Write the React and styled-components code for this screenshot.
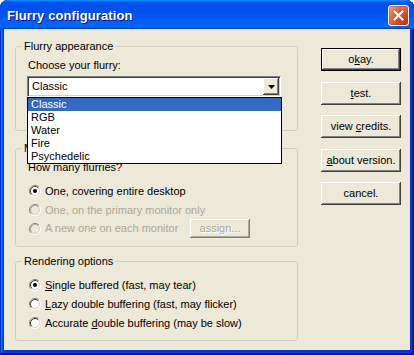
import React from 'react';
import styled, { createGlobalStyle } from 'styled-components';

const Global = createGlobalStyle`
  html, body { margin: 0; padding: 0; background: #ffffff; }
  body { font-family: "Liberation Sans", Arial, sans-serif; font-size: 11px; color: #000; }
  * { box-sizing: border-box; }
`;

const Window = styled.div`
  width: 414px;
  height: 355px;
  display: flex;
  flex-direction: column;
  padding: 0 4px 5px;
  background: #0831d9;
  border-radius: 8px 8px 0 0;
  overflow: hidden;
  box-shadow: inset -1px -1px #00138c, inset 1px 1px #0831d9, inset -2px -2px #001ea0,
    inset 2px 2px #166aee, inset -3px -3px #003bda, inset 3px 3px #0855dd;
`;

const TitleBar = styled.div`
  flex: none;
  height: 29px;
  margin: 0 -4px;
  padding: 2px 5px 0 7px;
  display: flex;
  align-items: center;
  justify-content: space-between;
  border-radius: 8px 8px 0 0;
  background: linear-gradient(180deg, #0997ff, #0053ee 8%, #0050ee 40%, #0066ff 88%, #0066ff 93%, #005bff 95%, #003dd7 96%, #003dd7);
`;

const Title = styled.span`
  font-family: "Liberation Sans", Arial, sans-serif;
  font-weight: bold;
  font-size: 13px;
  line-height: 15px;
  color: #fff;
  text-shadow: 1px 1px #0f1089;
  letter-spacing: 0.1px;
`;

const CloseButton = styled.div`
  width: 21px;
  height: 21px;
  border: 1px solid #fff;
  border-radius: 3px;
  display: flex;
  align-items: center;
  justify-content: center;
  background: radial-gradient(circle at 85% 85%, #c23a12 0%, #d9532b 45%, #e67a55 75%, #f4b49a 100%);
  box-shadow: inset 0 0 0 1px rgba(160, 40, 10, 0.25);
`;

const Client = styled.div`
  flex: 1;
  background: #ece9d8;
  display: flex;
  align-items: flex-start;
  padding: 11px 0 0 11px;
`;

const LeftColumn = styled.div`
  width: 283px;
  display: flex;
  flex-direction: column;
`;

const Group = styled.fieldset`
  margin: ${p => p.$mt || 0}px 0 0;
  padding: 0;
  border: 1px solid #d0d0bf;
  border-radius: 3px;
  min-width: 0;
  position: relative;
`;

const Legend = styled.legend`
  margin-left: 6px;
  padding: 0 2px;
  height: 13px;
  line-height: 13px;
  font-size: 11px;
  color: #000;
`;

const GroupBody = styled.div`
  padding: ${p => p.$pt}px 15px ${p => p.$pb}px 11px;
  display: flex;
  flex-direction: column;
`;

const Label = styled.div`
  line-height: 13px;
  height: 13px;
  padding-left: 1px;
  color: ${p => (p.$disabled ? '#aca899' : '#000')};
`;

const SelectWrap = styled.div`
  position: relative;
  margin-top: 4px;
  width: 254px;
`;

const SelectBox = styled.div`
  height: 21px;
  display: flex;
  align-items: center;
  justify-content: space-between;
  background: #fff;
  border: 1px solid;
  border-color: #808080 #fff #fff #808080;
  box-shadow: inset 1px 1px #404040, inset -1px -1px #d4d0c8;
  padding: 0 1px 0 4px;
  line-height: 13px;
`;

const DropButton = styled.div`
  width: 16px;
  height: 17px;
  display: flex;
  align-items: center;
  justify-content: center;
  background: #ece9d8;
  box-shadow: inset -1px -1px #404040, inset 1px 1px #fff, inset -2px -2px #808080, inset 2px 2px #ece9d8;
`;

const DropList = styled.div`
  position: absolute;
  top: 21px;
  left: 0;
  width: 255px;
  background: #fff;
  border: 1px solid #000;
  z-index: 5;
`;

const DropItem = styled.div`
  height: 13px;
  line-height: 13px;
  padding-left: 3px;
  background: ${p => (p.$active ? '#316ac5' : '#fff')};
  color: ${p => (p.$active ? '#fff' : '#000')};
`;

const RadioList = styled.div`
  margin-top: ${p => p.$mt || 0}px;
  display: flex;
  flex-direction: column;
`;

const RadioRow = styled.div`
  height: 19px;
  display: flex;
  align-items: center;
  gap: 4px;
  color: ${p => (p.$disabled ? '#aca899' : '#000')};
  ${p => (p.$spread ? 'width: 223px; justify-content: space-between;' : '')}
`;

const RadioLabel = styled.div`
  display: flex;
  align-items: center;
  gap: 4px;
  line-height: 13px;
`;

const RadioIcon = styled.svg`
  flex: none;
  margin-left: 2px;
`;

const RightColumn = styled.div`
  margin-left: 23px;
  padding-top: 8px;
  display: flex;
  flex-direction: column;
  gap: 10.5px;
`;

const Button = styled.div`
  width: ${p => p.$w || 80}px;
  height: ${p => p.$h || 23}px;
  display: flex;
  align-items: center;
  justify-content: center;
  background: #ece9d8;
  line-height: 13px;
  white-space: pre;
  color: ${p => (p.$disabled ? '#aca899' : '#000')};
  text-shadow: ${p => (p.$disabled ? '1px 1px #fff' : 'none')};
  border: ${p => (p.$default ? '1px solid #000' : 'none')};
  box-shadow: inset -1px -1px #404040, inset 1px 1px #fff, inset -2px -2px #808080, inset 2px 2px #ece9d8;
  ${p => (p.$disabled ? 'box-shadow: inset -1px -1px #808080, inset 1px 1px #fff, inset -2px -2px #aca899, inset 2px 2px #ece9d8;' : '')}
`;

function Radio({ checked, disabled }) {
  const fill = disabled ? '#ece9d8' : '#fff';
  return (
    <RadioIcon width="12" height="12" viewBox="0 0 12 12">
      <circle cx="6" cy="6" r="5" fill={fill} />
      <path d="M2.11 9.89 A5.5 5.5 0 0 1 9.89 2.11" fill="none" stroke="#808080" />
      <path d="M9.89 2.11 A5.5 5.5 0 0 1 2.11 9.89" fill="none" stroke="#ffffff" />
      <path d="M2.82 9.18 A4.5 4.5 0 0 1 9.18 2.82" fill="none" stroke={disabled ? '#aca899' : '#404040'} />
      <path d="M9.18 2.82 A4.5 4.5 0 0 1 2.82 9.18" fill="none" stroke="#d4d0c8" />
      {checked && <circle cx="6" cy="6" r="2" fill={disabled ? '#aca899' : '#000'} />}
    </RadioIcon>
  );
}

export default function App() {
  return (
    <>
      <Global />
      <Window>
        <TitleBar>
          <Title>Flurry configuration</Title>
          <CloseButton>
            <svg width="11" height="11" viewBox="0 0 11 11">
              <path d="M1.5 1.5 L9.5 9.5 M9.5 1.5 L1.5 9.5" stroke="#fff" strokeWidth="2" strokeLinecap="square" />
            </svg>
          </CloseButton>
        </TitleBar>
        <Client>
          <LeftColumn>
            <Group>
              <Legend>Flurry appearance</Legend>
              <GroupBody $pt={6} $pb={33}>
                <Label>Choose your flurry:</Label>
                <SelectWrap>
                  <SelectBox>
                    <span>Classic</span>
                    <DropButton>
                      <svg width="7" height="4" viewBox="0 0 7 4">
                        <path d="M0 0 H7 L3.5 4 Z" fill="#000" />
                      </svg>
                    </DropButton>
                  </SelectBox>
                  <DropList>
                    <DropItem $active>Classic</DropItem>
                    <DropItem>RGB</DropItem>
                    <DropItem>Water</DropItem>
                    <DropItem>Fire</DropItem>
                    <DropItem>Psychedelic</DropItem>
                  </DropList>
                </SelectWrap>
              </GroupBody>
            </Group>

            <Group $mt={11}>
              <Legend>Multi-monitor behaviour</Legend>
              <GroupBody $pt={6} $pb={8}>
                <Label>How many flurries?</Label>
                <RadioList $mt={7}>
                  <RadioRow>
                    <Radio checked />
                    <span>One, covering entire desktop</span>
                  </RadioRow>
                  <RadioRow $disabled>
                    <Radio disabled />
                    <span>One, on the primary monitor only</span>
                  </RadioRow>
                  <RadioRow $disabled $spread>
                    <RadioLabel>
                      <Radio disabled />
                      <span>A new one on each monitor</span>
                    </RadioLabel>
                    <Button $disabled $w={60} $h={19}>assign...</Button>
                  </RadioRow>
                </RadioList>
              </GroupBody>
            </Group>

            <Group $mt={8}>
              <Legend>Rendering options</Legend>
              <GroupBody $pt={7} $pb={8}>
                <RadioList>
                  <RadioRow>
                    <Radio checked />
                    <span><u>S</u>ingle buffered (fast, may tear)</span>
                  </RadioRow>
                  <RadioRow>
                    <Radio />
                    <span><u>L</u>azy double buffering (fast, may flicker)</span>
                  </RadioRow>
                  <RadioRow>
                    <Radio />
                    <span>Accurate <u>d</u>ouble buffering (may be slow)</span>
                  </RadioRow>
                </RadioList>
              </GroupBody>
            </Group>
          </LeftColumn>

          <RightColumn>
            <Button $default><span>o<u>k</u>ay.</span></Button>
            <Button><span><u>t</u>est.</span></Button>
            <Button><span>view <u>c</u>redits.</span></Button>
            <Button><span><u>a</u>bout version.</span></Button>
            <Button><span>cancel.</span></Button>
          </RightColumn>
        </Client>
      </Window>
    </>
  );
}
